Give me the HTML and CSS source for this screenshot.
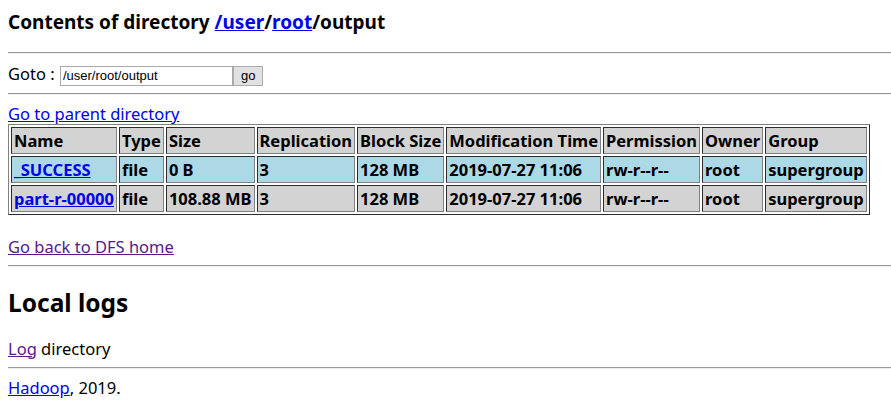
FILE: index.html
```html
<!DOCTYPE html>
<html lang="en">
<head>
  <meta charset="UTF-8">
  <title>HDFS:/user/root/output</title>
  <link rel="stylesheet" href="styles.css">
</head>
<body>
  <h3 class="title">Contents of directory <a href="#">/user</a>/<a href="#">root</a>/output</h3>
  <hr>
  <form class="goto">
    Goto : <input type="text" class="goto-input" value="/user/root/output"><button type="button" class="goto-button">go</button>
  </form>
  <hr>
  <a href="#">Go to parent directory</a><br>
  <table class="listing" border="1" cellpadding="2" cellspacing="2">
    <tr class="row-head">
      <td>Name</td><td>Type</td><td>Size</td><td>Replication</td><td>Block Size</td><td>Modification Time</td><td>Permission</td><td>Owner</td><td>Group</td>
    </tr>
    <tr class="row-blue">
      <td><a href="#">_SUCCESS</a></td><td>file</td><td>0 B</td><td>3</td><td>128 MB</td><td>2019-07-27 11:06</td><td>rw-r--r--</td><td>root</td><td>supergroup</td>
    </tr>
    <tr class="row-gray">
      <td><a href="#">part-r-00000</a></td><td>file</td><td>108.88 MB</td><td>3</td><td>128 MB</td><td>2019-07-27 11:06</td><td>rw-r--r--</td><td>root</td><td>supergroup</td>
    </tr>
  </table>
  <br>
  <a href="#" class="visited">Go back to DFS home</a>
  <hr>
  <h2 class="logs">Local logs</h2>
  <a href="#" class="visited">Log</a> directory
  <hr>
  <a href="#">Hadoop</a>, 2019.
</body>
</html>
```

FILE: styles.css
```css
body {
  font-family: "Noto Sans", "Open Sans", sans-serif;
  font-size: 16.5px;
  line-height: 21px;
  margin: 8px 0 8px 8px;
  color: #000;
  background: #fff;
}
a {
  color: #0000ee;
}
a.visited {
  color: #551a8b;
}
hr {
  border: none;
  border-top: 1px solid #9a9a9a;
  border-bottom: 1px solid #eee;
  margin: 8px 0;
}
.title {
  font-size: 19px;
  line-height: 26px;
  margin: 1px 0 17px;
}
.goto {
  margin: 0;
  line-height: 22px;
  padding-top: 1px;
}
.goto-input {
  font-family: Arial, "Liberation Sans", sans-serif;
  font-size: 13px;
  width: 173px;
  height: 20px;
  padding: 0 2px;
  border: 1px solid #a9a9a9;
  box-sizing: border-box;
  margin: 0 0 0 1px;
  vertical-align: middle;
}
.goto-button {
  font-family: Arial, "Liberation Sans", sans-serif;
  font-size: 13px;
  height: 20px;
  margin: 0;
  padding: 0 7px;
  border: 1px solid #adadad;
  background: #e1e1e1;
  vertical-align: middle;
}
.goto + hr {
  margin-top: 7px;
}
.listing {
  border-color: #808080;
  font-weight: bold;
}
.listing td {
  border-color: #808080;
}
.row-head {
  background: #d3d3d3;
}
.row-blue {
  background: #add8e6;
}
.row-gray {
  background: #d3d3d3;
}
.logs {
  font-size: 24.5px;
  line-height: 32px;
  margin: 20px 0 19px;
}
```
